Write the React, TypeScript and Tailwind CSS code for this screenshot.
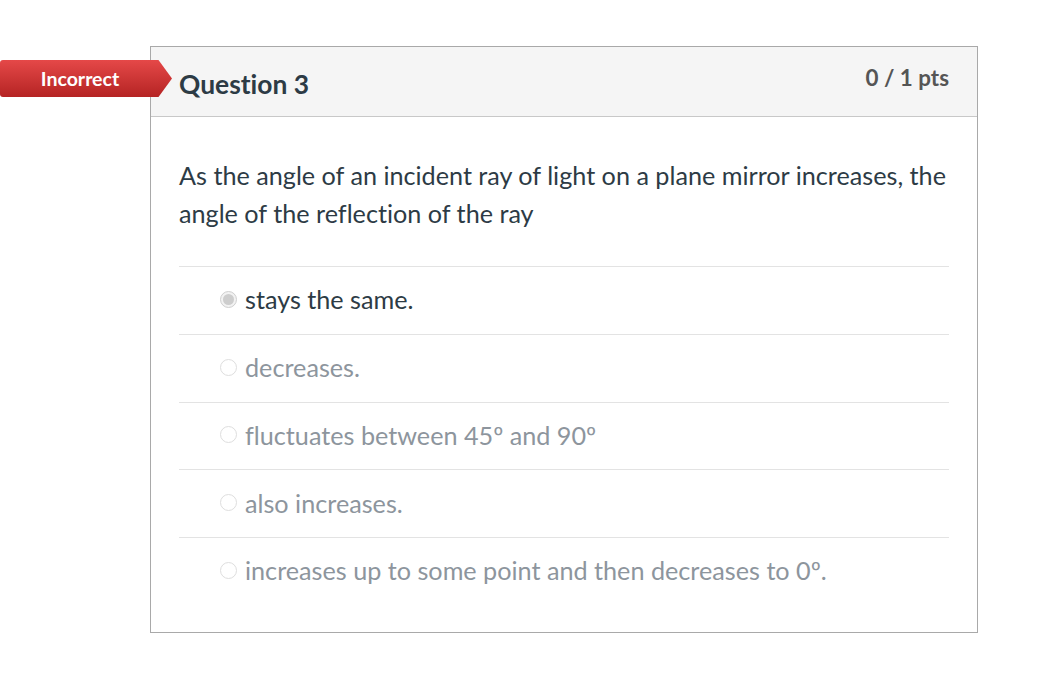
import React from "react";

const answers = [
  { text: <>stays the same.</>, selected: true },
  { text: <>decreases.</>, selected: false },
  { text: <>fluctuates between 45º and 90º</>, selected: false },
  { text: <>also increases.</>, selected: false },
  { text: <>increases up to some point and then decreases to 0º.</>, selected: false },
];

export default function App() {
  return (
    <div
      className="min-h-[683px] bg-white pl-[150px] pt-[46px] [font-variant-ligatures:none]"
      style={{ fontFamily: "Lato, 'Open Sans', sans-serif" }}
    >
      <div className="relative w-[828px] border border-[#a9a9a9] bg-white">
        {/* Incorrect badge */}
        <div className="absolute left-[-151px] top-[13px] flex h-[37px] items-center">
          <div className="flex h-[37px] w-[158px] items-center justify-center rounded-l-[3px] bg-gradient-to-b from-[#e54848] to-[#b52323] pl-[2px] text-[19.5px] font-bold text-white">
            Incorrect
          </div>
          <svg width="14" height="37" viewBox="0 0 14 37" className="block">
            <defs>
              <linearGradient id="rg" x1="0" y1="0" x2="0" y2="1">
                <stop offset="0" stopColor="#e54848" />
                <stop offset="1" stopColor="#b52323" />
              </linearGradient>
            </defs>
            <polygon points="0,0 0.5,0 14,18.5 0.5,37 0,37" fill="url(#rg)" />
          </svg>
        </div>

        {/* Header */}
        <div className="flex h-[70px] items-start justify-between border-b border-[#c8c8c8] bg-[#f5f5f5] px-[28px]">
          <div className="pt-[22px] text-[26.4px] font-bold leading-[30px] text-[#2d3b45]">
            Question 3
          </div>
          <div className="pt-[16px] text-[22.4px] font-bold leading-[30px] text-[#555555]">
            0 / 1 pts
          </div>
        </div>

        {/* Body */}
        <div className="px-[28px] pb-[27px] pt-[39px]">
          <p className="text-[25.2px] leading-[38px] text-[#2d3b45]">
            As the angle of an incident ray of light on a plane mirror increases, the angle of the
            reflection of the ray
          </p>
          <div className="mt-[34px]">
            {answers.map((a, i) => (
              <div
                key={i}
                className="flex h-[67.75px] items-center border-t border-[#e3e3e3] pb-[2px] pl-[41px]"
              >
                {a.selected ? (
                  <span className="flex h-[17px] w-[17px] shrink-0 items-center justify-center rounded-full border border-[#cfcfcf] bg-[#f2f2f2]">
                    <span className="h-[11px] w-[11px] rounded-full bg-[#cdcdcd]" />
                  </span>
                ) : (
                  <span className="h-[17px] w-[17px] shrink-0 rounded-full border border-[#dedede] bg-white" />
                )}
                <span
                  className={
                    "ml-[8px] text-[25.2px] leading-[30px] " +
                    (a.selected ? "text-[#2d3b45]" : "text-[#8d959d]")
                  }
                >
                  {a.text}
                </span>
              </div>
            ))}
          </div>
        </div>
      </div>
    </div>
  );
}
